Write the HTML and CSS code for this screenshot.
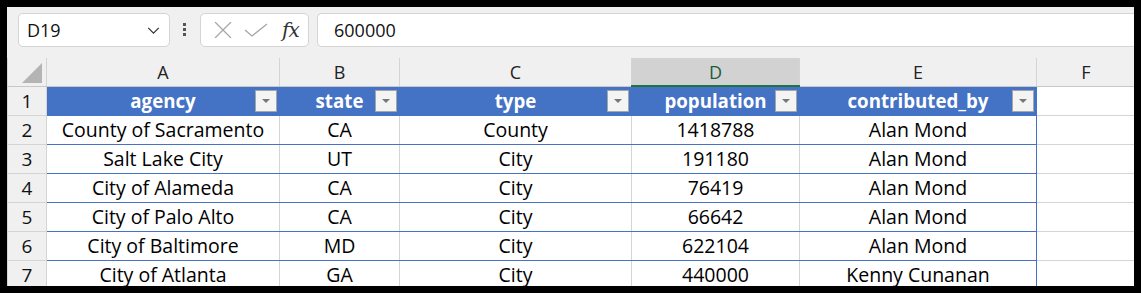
FILE: index.html
```html
<!DOCTYPE html>
<html lang="en">
<head>
    <meta charset="UTF-8">
    <title>Sheet</title>
    <link rel="stylesheet" href="styles.css">
</head>
<body>
    <div class="window">
        <div class="formula-bar">
            <div class="name-box">
                <span>D19</span>
                <svg class="chevron" viewBox="0 0 14 8"><polyline points="1,1 7,7 13,1" fill="none" stroke="#333" stroke-width="1.4"/></svg>
            </div>
            <svg class="grip" viewBox="0 0 4 14">
                <rect x="0" y="0" width="3" height="3" fill="#555"/>
                <rect x="0" y="5" width="3" height="3" fill="#555"/>
                <rect x="0" y="10" width="3" height="3" fill="#555"/>
            </svg>
            <div class="fx-group">
                <svg class="cancel" viewBox="0 0 18 16"><path d="M1 0 L17 16 M17 0 L1 16" stroke="#a6a6a6" stroke-width="1.3" fill="none"/></svg>
                <svg class="enter" viewBox="0 0 24 14"><polyline points="1,7 8,13 23,1" stroke="#a6a6a6" stroke-width="1.3" fill="none"/></svg>
                <span class="fx">fx</span>
            </div>
            <div class="formula-input">600000</div>
        </div>
        <table class="sheet">
            <colgroup>
                <col class="c-head">
                <col class="c-a">
                <col class="c-b">
                <col class="c-c">
                <col class="c-d">
                <col class="c-e">
                <col class="c-f">
            </colgroup>
            <thead>
                <tr class="letters">
                    <th class="corner"><span class="select-all"></span></th>
                    <th>A</th>
                    <th>B</th>
                    <th>C</th>
                    <th class="active">D</th>
                    <th>E</th>
                    <th>F</th>
                </tr>
            </thead>
            <tbody>
                <tr class="head-row">
                    <th class="num">1</th>
                    <td class="hd">agency<span class="filter"></span></td>
                    <td class="hd">state<span class="filter"></span></td>
                    <td class="hd">type<span class="filter"></span></td>
                    <td class="hd">population<span class="filter"></span></td>
                    <td class="hd last">contributed_by<span class="filter"></span></td>
                    <td></td>
                </tr>
                <tr>
                    <th class="num">2</th>
                    <td class="t">County of Sacramento</td>
                    <td class="t">CA</td>
                    <td class="t">County</td>
                    <td class="t">1418788</td>
                    <td class="t last">Alan Mond</td>
                    <td></td>
                </tr>
                <tr>
                    <th class="num">3</th>
                    <td class="t">Salt Lake City</td>
                    <td class="t">UT</td>
                    <td class="t">City</td>
                    <td class="t">191180</td>
                    <td class="t last">Alan Mond</td>
                    <td></td>
                </tr>
                <tr>
                    <th class="num">4</th>
                    <td class="t">City of Alameda</td>
                    <td class="t">CA</td>
                    <td class="t">City</td>
                    <td class="t">76419</td>
                    <td class="t last">Alan Mond</td>
                    <td></td>
                </tr>
                <tr>
                    <th class="num">5</th>
                    <td class="t">City of Palo Alto</td>
                    <td class="t">CA</td>
                    <td class="t">City</td>
                    <td class="t">66642</td>
                    <td class="t last">Alan Mond</td>
                    <td></td>
                </tr>
                <tr>
                    <th class="num">6</th>
                    <td class="t">City of Baltimore</td>
                    <td class="t">MD</td>
                    <td class="t">City</td>
                    <td class="t">622104</td>
                    <td class="t last">Alan Mond</td>
                    <td></td>
                </tr>
                <tr>
                    <th class="num">7</th>
                    <td class="t">City of Atlanta</td>
                    <td class="t">GA</td>
                    <td class="t">City</td>
                    <td class="t">440000</td>
                    <td class="t last">Kenny Cunanan</td>
                    <td></td>
                </tr>
            </tbody>
        </table>
    </div>
</body>
</html>
```

FILE: styles.css
```css
html, body {
    margin: 0;
    padding: 0;
    background-color: #000;
    font-family: "Open Sans", "Noto Sans", sans-serif;
}
.window {
    margin: 7px;
    width: 1127px;
    height: 279px;
    background-color: #f0f0f0;
    overflow: hidden;
}
.formula-bar {
    display: flex;
    align-items: center;
    height: 51px;
    padding: 0 0 5px 11px;
    box-sizing: border-box;
}
.name-box, .fx-group, .formula-input {
    height: 34px;
    box-sizing: border-box;
    background-color: #fff;
    border: 1px solid #d4d4d4;
    border-radius: 5px;
    display: flex;
    align-items: center;
}
.name-box {
    width: 152px;
    padding: 0 8px 0 8px;
    justify-content: space-between;
    font-size: 18px;
    color: #111;
}
.chevron {
    width: 13px;
    height: 7px;
    margin-right: 1px;
}
.grip {
    width: 4px;
    height: 14px;
    margin: 0 13px 0 13px;
}
.fx-group {
    width: 109px;
    padding-left: 13px;
}
.cancel {
    width: 18px;
    height: 16px;
}
.enter {
    width: 24px;
    height: 14px;
    margin-left: 12px;
}
.fx {
    font-family: "DejaVu Serif", "Liberation Serif", serif;
    font-style: italic;
    font-size: 20px;
    color: #333;
    margin-left: 14px;
    letter-spacing: -1px;
}
.formula-input {
    flex-grow: 1;
    margin-left: 8px;
    margin-right: -8px;
    padding-left: 16px;
    font-size: 18px;
    color: #111;
    border-right: none;
}
.sheet {
    border-collapse: collapse;
    table-layout: fixed;
    width: 1128px;
    font-size: 19.5px;
    color: #000;
}
.c-head { width: 39px; }
.c-a { width: 233px; }
.c-b { width: 120px; }
.c-c { width: 232px; }
.c-d { width: 168px; }
.c-e { width: 237px; }
.c-f { width: 99px; }
.sheet th, .sheet td {
    border: 1px solid #d4d4d4;
    padding: 0;
    text-align: center;
    white-space: nowrap;
    overflow: hidden;
}
.letters th {
    height: 27px;
    background-color: #f0f0f0;
    font-weight: normal;
    font-size: 18px;
    color: #222;
    border-top: none;
    border-bottom: 1px solid #c8c8c8;
}
.letters th.active {
    background-color: #d2d2d2;
    color: #1b5e3b;
    border-bottom: 2px solid #217346;
}
.corner {
    position: relative;
}
.select-all {
    position: absolute;
    right: 4px;
    bottom: 3px;
    width: 0;
    height: 0;
    border-left: 20px solid transparent;
    border-bottom: 20px solid #b4b4b4;
}
.sheet tbody tr {
    height: 29px;
}
.num {
    background-color: #f0f0f0;
    font-weight: normal;
    color: #111;
    font-size: 19px;
    border-left: none;
}
.sheet td {
    background-color: #fff;
}
.sheet td.hd {
    background-color: #4472c4;
    color: #fff;
    font-weight: bold;
    font-size: 18.7px;
    border-color: #4472c4;
    position: relative;
}
.filter {
    position: absolute;
    right: 2px;
    top: 3px;
    width: 22px;
    height: 22px;
    box-sizing: border-box;
    background-color: #f4f4f4;
    border: 1px solid #a6a6a6;
}
.filter::after {
    content: "";
    position: absolute;
    left: 6px;
    top: 8px;
    border-left: 4px solid transparent;
    border-right: 4px solid transparent;
    border-top: 4px solid #777;
}
.sheet td.t {
    border-bottom: 1px solid #4472c4;
}
.sheet td.last {
    border-right: 1px solid #4472c4;
}
```
